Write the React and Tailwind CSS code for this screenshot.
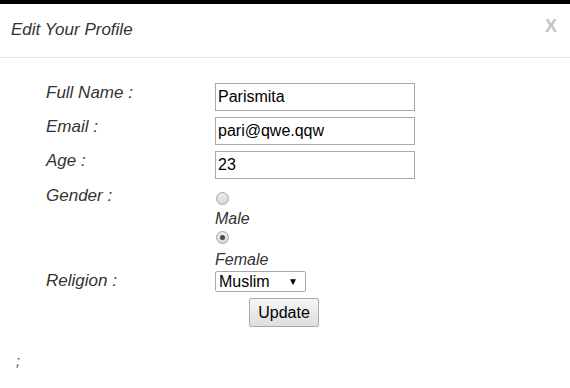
import React from "react";

function Radio({ checked }) {
  return (
    <span className="flex h-[13px] w-[13px] items-center justify-center rounded-full border border-[#a6a6a6] bg-gradient-to-b from-[#ececec] to-[#d8d8d8]">
      {checked && <span className="h-[5px] w-[5px] rounded-full bg-[#4a4a4a]" />}
    </span>
  );
}

export default function App() {
  const font = { fontFamily: '"Liberation Sans", Arial, sans-serif' };
  return (
    <div className="h-[388px] w-[570px] overflow-hidden border-t-4 border-black bg-white text-[16px] leading-[18px]" style={font}>
      <div className="flex h-[54px] items-start justify-between border-b border-[#e5e5e5] pl-[11px] pr-[13px]">
        <div className="mt-[17px] text-[17px] italic text-[#333]">Edit Your Profile</div>
        <div className="mt-[12px] text-[18px] font-bold leading-[20px] text-[#c4c4c4]">X</div>
      </div>

      <div className="pt-[25px]">
        <div className="flex items-start">
          <div className="w-[215px] pl-[46px] pt-[1px] text-[17px] italic text-[#333]">Full Name :</div>
          <input readOnly value="Parismita" className="h-[28px] w-[200px] border border-[#a9a9a9] px-[2px] text-[16px] text-black outline-none" style={font} />
        </div>
        <div className="mt-[6px] flex items-start">
          <div className="w-[215px] pl-[46px] pt-[1px] text-[17px] italic text-[#333]">Email :</div>
          <input readOnly value="pari@qwe.qqw" className="h-[28px] w-[200px] border border-[#a9a9a9] px-[2px] text-[16px] text-black outline-none" style={font} />
        </div>
        <div className="mt-[6px] flex items-start">
          <div className="w-[215px] pl-[46px] pt-[1px] text-[17px] italic text-[#333]">Age :</div>
          <input readOnly value="23" className="h-[28px] w-[200px] border border-[#a9a9a9] px-[2px] text-[16px] text-black outline-none" style={font} />
        </div>

        <div className="mt-[7px] flex items-start">
          <div className="w-[215px] pl-[46px] pt-[1px] text-[17px] italic text-[#333]">Gender :</div>
          <div className="flex flex-col items-start">
            <div className="ml-[1px] mt-[6px]"><Radio /></div>
            <div className="mt-[5px] italic text-[#333]">Male</div>
            <div className="ml-[1px] mt-[3px]"><Radio checked /></div>
            <div className="mt-[7px] italic text-[#333]">Female</div>
          </div>
        </div>

        <div className="mt-[1px] flex items-start">
          <div className="w-[215px] pl-[46px] pt-[2px] text-[17px] italic text-[#333]">Religion :</div>
          <div className="relative mt-[1px] flex h-[21px] w-[91px] items-center rounded-[2px] border border-[#a9a9a9] bg-white pl-[3px] text-black">
            Muslim
            <span className="absolute right-[7px] top-[5px] text-[10px] leading-[10px] text-black">▼</span>
          </div>
        </div>

        <div className="mt-[6px] pl-[249px]">
          <button className="h-[29px] w-[70px] rounded-[2px] border border-[#a9a9a9] bg-gradient-to-b from-[#f6f6f6] to-[#dedede] text-[16px] text-black" style={font}>
            Update
          </button>
        </div>

        <div className="mt-[25px] pl-[16px] text-[14px] italic text-[#333]">;</div>
      </div>
    </div>
  );
}
